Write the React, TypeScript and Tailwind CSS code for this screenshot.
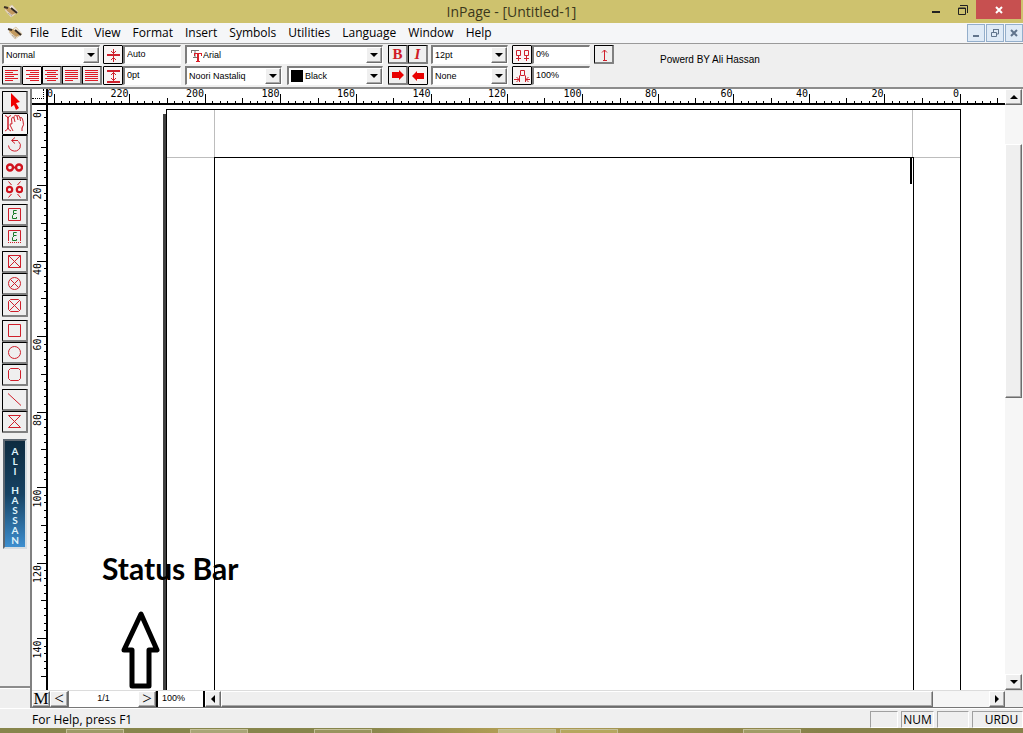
import React, { useLayoutEffect, useRef, useState } from 'react';

const MENUS = ['File', 'Edit', 'View', 'Format', 'Insert', 'Symbols', 'Utilities', 'Language', 'Window', 'Help'];

// 20 ruler units are 151/2 pixels wide
const STEP = 151 / 20;

const RAISED = 'border border-t-white border-l-white border-r-[#6d6d6d] border-b-[#6d6d6d] bg-[#efefef] shadow-[inset_-1px_-1px_0_#a8a8a8]';
const SUNKEN = 'border-t-2 border-l-2 border-t-[#7d7d7d] border-l-[#7d7d7d] border-r border-b border-r-white border-b-white bg-white';

const AppIcon = () => (
  <svg width="16" height="14" viewBox="0 0 16 14" fill="none">
    <path d="M2 6 L9 1 L15 8 L8 13 Z" fill="#f6ecdc" stroke="#dccbb0" />
    <path d="M1 3 L6 3 L13 9 L9 11 L4 7 Z" fill="#c39a5f" />
    <path d="M1 3 L5 4" stroke="#3d3227" strokeWidth="2" />
    <path d="M8 4 L14 9" stroke="#332a22" strokeWidth="2" />
    <path d="M5 9 L9 12" stroke="#a8a29c" />
  </svg>
);

type GlyphProps = { children: React.ReactNode; size?: number };

const Glyph = ({ children, size = 16 }: GlyphProps) => (
  <svg width={size} height={size} viewBox={`0 0 ${size} ${size}`} fill="none" stroke="#cf1f2b" className="shrink-0">
    {children}
  </svg>
);

const Arrow = ({ dir }: { dir: 'up' | 'down' | 'left' | 'right' }) => {
  const paths = {
    up: 'M0 6 L4 2 L8 6 Z',
    down: 'M0 2 L8 2 L4 6 Z',
    left: 'M6 0 L6 8 L2 4 Z',
    right: 'M2 0 L6 4 L2 8 Z',
  };
  return (
    <svg width="8" height="8" viewBox="0 0 8 8">
      <path d={paths[dir]} fill="#000" />
    </svg>
  );
};

type ToolButtonProps = { label: string; pressed?: boolean; onClick?: () => void; children: React.ReactNode };

const ToolButton = ({ label, pressed, onClick, children }: ToolButtonProps) => (
  <button
    aria-label={label}
    aria-pressed={pressed}
    onClick={onClick}
    className={`flex h-[19px] w-5 shrink-0 items-center justify-center rounded-[1px] border-t border-l border-black ${
      pressed ? 'border-r border-b bg-[#f8f4f4]' : 'border-r-2 border-b-2 border-r-[#808080] border-b-[#808080] bg-[#efefef]'
    }`}
  >
    {children}
  </button>
);

type ComboProps = { label: string; options: string[]; icon?: React.ReactNode; className: string };

const Combo = ({ label, options, icon, className }: ComboProps) => (
  <div className={`relative flex h-[19px] ${className}`}>
    <select
      aria-label={label}
      className={`block h-full w-full appearance-none rounded-none pr-5 text-[9px] leading-4 outline-none ${SUNKEN} ${icon ? 'pl-4' : 'pl-[2px]'}`}
    >
      {options.map((o) => (
        <option key={o}>{o}</option>
      ))}
    </select>
    {icon && <span className="pointer-events-none absolute top-1 left-1">{icon}</span>}
    <span className={`pointer-events-none absolute top-[2px] right-px bottom-px flex w-4 items-center justify-center ${RAISED}`}>
      <Arrow dir="down" />
    </span>
  </div>
);

const Field = ({ label, value }: { label: string; value: string }) => (
  <input
    aria-label={label}
    defaultValue={value}
    className={`h-[19px] w-[58px] rounded-none pb-[2px] pl-[2px] text-[9px] outline-none ${SUNKEN}`}
  />
);

// [from, to] of every text line
const ALIGNMENTS: { name: string; rows: number[][] }[] = [
  { name: 'Align left', rows: [[1, 14], [1, 9], [1, 14], [1, 10], [1, 14], [1, 9]] },
  { name: 'Align right', rows: [[1, 14], [5, 14], [1, 14], [4, 14], [1, 14], [5, 14]] },
  { name: 'Centre', rows: [[1, 14], [3, 12], [1, 14], [3, 12], [1, 14], [3, 12]] },
  { name: 'Justify', rows: [[1, 14], [1, 14], [1, 14], [1, 14], [1, 14], [1, 9]] },
  { name: 'Force justify', rows: [[1, 14], [1, 14], [1, 14], [1, 14], [1, 14], [1, 14]] },
];

const BOX = 'M2.5 2.5 H14.5 V14.5 H2.5 Z';
const ROUND_BOX = 'M4.5 2.5 H12.5 L14.5 4.5 V12.5 L12.5 14.5 H4.5 L2.5 12.5 V4.5 Z';
const AIN = 'M10.5 5 V4.5 H7.5 V7.5 H10.5 M8.5 7.5 L6.5 9.5 V12.5 H10.5 V11';

const TOOL_GROUPS: { name: string; icon: React.ReactNode }[][] = [
  [
    { name: 'Arrow', icon: <path d="M5 0 L14 9 L10 10 L13 15 L10 17 L8 12 L5 14 Z" fill="#f00000" stroke="none" /> },
    {
      name: 'Hand',
      icon: (
        <path d="M0 1.5 Q3 2 3 5 V13 Q3 16 0 17 M6 1.5 Q3 2 3 5 V13 Q3 16 6 17 M8 17 L5 11 Q5 9 7 10 L6.5 5 Q7 2 9 4 L10 8 M9 4 Q9 0 12 2 L13 6 M12 2 Q14 0 15 4 L15.5 7 M15 4 Q17 2 18 7 Q19.5 11 17 14 L17 17" />
      ),
    },
    { name: 'Rotate', icon: <path d="M12.5 4.5 Q15.5 7 14 11 Q11 15.5 6 13.5 Q2.5 12 2.5 8.5 M6 3.5 H12 M9 0.5 L5.5 3.5 L9 6.5" /> },
    {
      name: 'Link',
      icon: (
        <g stroke="#d0141f">
          <circle cx="4" cy="8.5" r="3" strokeWidth="2.4" />
          <circle cx="13" cy="8.5" r="3" strokeWidth="2.4" />
          <path d="M6 8.5 H11" strokeWidth="2" />
        </g>
      ),
    },
    {
      name: 'Unlink',
      icon: (
        <g stroke="#d0141f">
          <circle cx="3.5" cy="8.5" r="2.7" strokeWidth="2.2" />
          <circle cx="13.5" cy="8.5" r="2.7" strokeWidth="2.2" />
          <path d="M2.5 0.5 L5.5 4 M14.5 0.5 L11.5 4 M2.5 16.5 L5.5 13 M14.5 16.5 L11.5 13" />
        </g>
      ),
    },
  ],
  [
    { name: 'Text box', icon: <><path d={BOX} /><path d={AIN} stroke="#177a27" /></> },
    { name: 'Title text box', icon: <><path d="M2.5 13 V2.5 H14.5 V13" /><path d="M2 14.5 H15" strokeDasharray="1 1" /><path d={AIN} stroke="#177a27" /></> },
  ],
  [
    { name: 'Picture box', icon: <path d={`${BOX} M2.5 2.5 L14.5 14.5 M14.5 2.5 L2.5 14.5`} /> },
    { name: 'Oval picture', icon: <><circle cx="8.5" cy="8.5" r="6" /><path d="M4.5 4.5 L12.5 12.5 M12.5 4.5 L4.5 12.5" /></> },
    { name: 'Rounded picture', icon: <path d={`${ROUND_BOX} M3.5 3.5 L13.5 13.5 M13.5 3.5 L3.5 13.5`} /> },
  ],
  [
    { name: 'Rectangle', icon: <path d={BOX} /> },
    { name: 'Ellipse', icon: <circle cx="8.5" cy="8.5" r="6" /> },
    { name: 'Rounded rectangle', icon: <path d={ROUND_BOX} /> },
  ],
  [
    { name: 'Line', icon: <path d="M2 2.5 L15 14.5" /> },
    { name: 'Polygon', icon: <path d="M2.5 2.5 H14.5 L2.5 14.5 H14.5 Z" /> },
  ],
];

const tickLength = (i: number) => (i % 10 === 0 ? 9 : i % 5 === 0 ? 5 : 2);

const RULER_FONT = 'font-["DejaVu_Sans_Mono",monospace] text-[10px]';

const useSize = () => {
  const ref = useRef<HTMLDivElement>(null);
  const [size, setSize] = useState({ width: 0, height: 0 });
  useLayoutEffect(() => {
    const el = ref.current!;
    const measure = () => setSize({ width: el.clientWidth, height: el.clientHeight });
    measure();
    window.addEventListener('resize', measure);
    return () => window.removeEventListener('resize', measure);
  }, []);
  return { ref, ...size };
};

// zero sits 45px in from the right end and the values grow to the left
const TopRuler = () => {
  const { ref, width } = useSize();
  const zero = width - 45;
  const ticks = Array.from({ length: Math.max(0, Math.ceil(zero / STEP)) + 6 }, (_, k) => k - 6);
  return (
    <div ref={ref} className="min-w-0 flex-1 overflow-hidden">
      <svg width={width} height="14" className="block">
        <g stroke="#000" shapeRendering="crispEdges">
          {ticks.map((i) => (
            <line key={i} x1={zero - i * STEP} x2={zero - i * STEP} y1={14 - tickLength(i)} y2="14" />
          ))}
        </g>
        {ticks.filter((i) => i >= 0 && i % 10 === 0).map((i) => (
          <text key={i} x={zero - i * STEP - 1} y="8" textAnchor="end" className={RULER_FONT}>
            {i * 2}
          </text>
        ))}
      </svg>
    </div>
  );
};

const SideRuler = () => {
  const { ref, height } = useSize();
  const ticks = Array.from({ length: Math.max(0, Math.floor((height - 5) / STEP)) }, (_, i) => i);
  return (
    <div ref={ref} className="w-4 shrink-0 overflow-hidden border-r-2 border-black">
      <svg width="14" height={height} className="block">
        <g stroke="#000" shapeRendering="crispEdges">
          {ticks.map((i) => (
            <line key={i} y1={5 + i * STEP} y2={5 + i * STEP} x1={14 - tickLength(i)} x2="14" />
          ))}
        </g>
        {ticks.filter((i) => i % 10 === 0).map((i) => (
          <text key={i} transform={`translate(9 ${7 + i * STEP}) rotate(-90)`} textAnchor="end" className={RULER_FONT}>
            {i * 2}
          </text>
        ))}
      </svg>
    </div>
  );
};

const TitleBar = () => (
  <header className="grid h-[23px] shrink-0 grid-cols-[1fr_auto_1fr] bg-[#cec26e]">
    <div className="pt-1 pl-[3px]"><AppIcon /></div>
    <h1 className='font-["Open_Sans",sans-serif] text-[14px] leading-[23px] text-[#3b371c]'>InPage - [Untitled-1]</h1>
    <div className="flex h-[19px] justify-end pr-[2px]">
      <button aria-label="Minimize" className="flex w-[26px] items-center justify-center">
        <svg width="10" height="10"><path d="M0 7 H8" stroke="#222" strokeWidth="2" /></svg>
      </button>
      <button aria-label="Restore" className="flex w-[26px] items-center justify-center">
        <svg width="12" height="12" fill="none" stroke="#222">
          <path d="M3 1.5 H10.5 V9" /><path d="M1.5 4 H8.5 V10.5 H1.5 Z M1 4.5 H9" />
        </svg>
      </button>
      <button aria-label="Close" className="flex w-[45px] items-center justify-center bg-[#c75050]">
        <svg width="8" height="8"><path d="M1 1 L7 7 M7 1 L1 7" stroke="#fff" strokeWidth="2" /></svg>
      </button>
    </div>
  </header>
);

const MDI_BUTTON = 'flex h-[18px] w-[18px] items-center justify-center border border-[#93aecb] bg-[#dfeaf6]';

const MenuBar = () => (
  <nav className='flex h-[21px] shrink-0 items-center border-b border-[#9a9a9a] bg-[#f5f6f8] pl-[7px] font-["Open_Sans",sans-serif] text-[12px]'>
    <AppIcon />
    <div className="flex gap-3 pl-[7px]">
      {MENUS.map((m) => (
        <button key={m} className="leading-5">{m}</button>
      ))}
    </div>
    <div className="ml-auto flex gap-px">
      <button aria-label="Minimize document" className={MDI_BUTTON}>
        <svg width="10" height="10"><path d="M2 8 H8" stroke="#61748c" strokeWidth="2" /></svg>
      </button>
      <button aria-label="Restore document" className={MDI_BUTTON}>
        <svg width="10" height="10" fill="none" stroke="#61748c">
          <path d="M3 1.5 H9 M8.5 1 V6 H6 M3.5 1 V4" /><path d="M1.5 4.5 H6.5 V8.5 H1.5 Z" />
        </svg>
      </button>
      <button aria-label="Close document" className={MDI_BUTTON}>
        <svg width="8" height="8"><path d="M1 1 L7 7 M7 1 L1 7" stroke="#61748c" strokeWidth="2" /></svg>
      </button>
    </div>
  </nav>
);

const FormatBar = () => {
  const [align, setAlign] = useState('Align right');
  return (
    <section className="flex h-[45px] shrink-0 border-b-2 border-[#8c8c8c] pt-px pl-[2px]">
      <div className="mr-px flex flex-col gap-[2px]">
        <Combo label="Style" options={['Normal']} className="w-[98px]" />
        <div className="flex">
          {ALIGNMENTS.map((a) => (
            <ToolButton key={a.name} label={a.name} pressed={a.name === align} onClick={() => setAlign(a.name)}>
              <svg width="15" height="13" stroke="#e01b26" shapeRendering="crispEdges">
                {a.rows.map(([from, to], i) => (
                  <path key={i} d={`M${from} ${i * 2 + 1.5} H${to}`} />
                ))}
              </svg>
            </ToolButton>
          ))}
        </div>
      </div>

      <div className="mr-1 flex flex-col gap-[2px]">
        <div className="flex">
          <ToolButton label="Line spacing" pressed>
            <Glyph><path d="M2 8 H15" strokeWidth="2" /><path d="M8.5 2 V15 M6 4 L8.5 6.5 L11 4 M6 13 L8.5 10.5 L11 13" /></Glyph>
          </ToolButton>
          <Field label="Line spacing value" value="Auto" />
        </div>
        <div className="flex">
          <ToolButton label="Paragraph spacing" pressed>
            <Glyph><path d="M2 3 H15 M2 14 H15" strokeWidth="2" /><path d="M8.5 4 V13 M6 7 L8.5 4.5 L11 7 M6 10 L8.5 12.5 L11 10" /></Glyph>
          </ToolButton>
          <Field label="Paragraph spacing value" value="0pt" />
        </div>
      </div>

      <div className="mr-[5px] flex flex-col gap-[2px]">
        <Combo
          label="Latin font"
          options={['Arial']}
          className="w-[198px]"
          icon={
            <svg width="14" height="13" fill="none">
              <path d="M2 1.5 H10 M6 1 V9 M2.5 1 V4 M4 8.5 H8" stroke="#777" />
              <path d="M5 4.5 H13 M5.5 4 V7 M12.5 4 V7 M7 12.5 H11" stroke="#d8202a" />
              <path d="M9 4 V13" stroke="#d8202a" strokeWidth="2" />
            </svg>
          }
        />
        <div className="flex gap-[5px]">
          <Combo label="Urdu font" options={['Noori Nastaliq']} className="w-[97px]" />
          <Combo label="Colour" options={['Black']} className="w-[96px]" icon={<span className="block h-3 w-3 bg-black" />} />
        </div>
      </div>

      <div className="mr-[3px] flex flex-col gap-[2px]">
        <div className='flex font-["Liberation_Serif",serif] text-[15px] leading-4 font-bold text-[#d01c26]'>
          <ToolButton label="Bold">B</ToolButton>
          <ToolButton label="Italic"><i>I</i></ToolButton>
        </div>
        <div className="flex">
          <ToolButton label="Left to right">
            <svg width="14" height="12"><path d="M1 3 H8 V1 L13 6 L8 11 V9 H1 Z" fill="#e80000" /></svg>
          </ToolButton>
          <ToolButton label="Right to left" pressed>
            <svg width="14" height="12"><path d="M13 3 H6 V1 L1 6 L6 11 V9 H13 Z" fill="#e80000" /></svg>
          </ToolButton>
        </div>
      </div>

      <div className="mr-1 flex flex-col gap-[2px]">
        <Combo label="Size" options={['12pt']} className="w-[77px]" />
        <Combo label="Language" options={['None']} className="w-[77px]" />
      </div>

      <div className="mr-1 flex flex-col gap-[2px]">
        <div className="flex">
          <ToolButton label="Tracking" pressed>
            <Glyph><path d="M2.5 3.5 H6.5 V8.5 H2.5 Z M10.5 3.5 H14.5 V8.5 H10.5 Z M4.5 9 V14 M2 11.5 H7 M12.5 9 V14 M10 11.5 H15" /></Glyph>
          </ToolButton>
          <Field label="Tracking value" value="0%" />
        </div>
        <div className="flex">
          <ToolButton label="Scale" pressed>
            <Glyph><path d="M6.5 2.5 H10.5 V7.5 H6.5 Z M5.5 7.5 V14 M11.5 7.5 V14 M0 11.5 H5 M2.5 9 L5 11.5 L2.5 14 M16 11.5 H12 M14.5 9 L12 11.5 L14.5 14" /></Glyph>
          </ToolButton>
          <Field label="Scale value" value="100%" />
        </div>
      </div>

      <ToolButton label="Baseline">
        <svg width="10" height="13" fill="none" stroke="#cf1f2b"><path d="M5.5 2 V12 M3 4.5 L5.5 2 L8 4.5 M4 12.5 H8" /></svg>
      </ToolButton>
      <p className="ml-[46px] self-start pt-[7px] text-[10px] leading-4">Powerd BY Ali Hassan</p>
    </section>
  );
};

const ToolBox = () => (
  <aside className="flex w-[30px] shrink-0 flex-col gap-[3px] pt-[2px] pl-[2px]">
    {TOOL_GROUPS.map((group, g) => (
      <div key={g} className="flex flex-col">
        {group.map((tool) => (
          <button
            key={tool.name}
            aria-label={tool.name}
            className={`flex h-[22px] w-[26px] items-center justify-center rounded-[1px] border-t border-l border-black ${
              tool.name === 'Hand' ? 'border-r border-b bg-[#f8f6f6]' : 'border-r-2 border-b-2 border-r-[#808080] border-b-[#808080] bg-[#efefef]'
            }`}
          >
            <Glyph size={tool.name === 'Hand' ? 20 : 17}>{tool.icon}</Glyph>
          </button>
        ))}
      </div>
    ))}
    <div className="mt-[3px] ml-px flex h-[110px] w-6 flex-col items-center border-2 border-t-[#5c6670] border-l-[#5c6670] border-r-[#d5dde2] border-b-[#d5dde2] bg-linear-to-b from-[#0d2b40] via-[#164263] to-[#3d8fd0] pt-[5px] text-[#dff3fb]">
      {['ALI', 'HASSAN'].map((word) => (
        <p key={word} className='mb-[9px] flex w-3 flex-col items-center font-["Lato",sans-serif] text-[10px] leading-[10px] font-bold'>
          {word.split('').map((c, i) => (
            <span key={i}>{c}</span>
          ))}
        </p>
      ))}
    </div>
    <hr className="-ml-[2px] mt-auto mb-[19px] border-t-2 border-b border-t-[#8c8c8c] border-b-white" />
  </aside>
);

const TRACK = 'bg-[#f6f6f6]';

const VerticalScroll = () => (
  <div className={`flex w-[18px] shrink-0 flex-col pr-px ${TRACK}`}>
    <button aria-label="Scroll up" className={`flex h-4 shrink-0 items-center justify-center ${RAISED}`}><Arrow dir="up" /></button>
    <div className="grow-[39]" />
    <div className={`grow-[253] ${RAISED}`} />
    <div className="grow-[277]" />
    <button aria-label="Scroll down" className={`flex h-4 shrink-0 items-center justify-center ${RAISED}`}><Arrow dir="down" /></button>
  </div>
);

const DocumentPage = () => (
  <main className="relative flex min-w-0 flex-1 justify-end overflow-hidden bg-white pt-1 pr-11">
    <div className="flex h-[1123px] w-[798px] shrink-0">
      <div className="mt-[5px] w-[3px] bg-[#404040]" />
      {/* sheet: margin guides outside, text frame inside */}
      <div className="grid flex-1 grid-cols-[48px_1fr_48px] grid-rows-[48px_1fr] border border-black">
        <div className="border-r border-b border-[#bdbdbd]" />
        <div />
        <div className="border-b border-l border-[#bdbdbd]" />
        <div />
        <div className="-mt-px -mr-[2px] -ml-px flex justify-end border border-black pr-px">
          <span className="h-[26px] w-[2px] bg-black" />
        </div>
        <div />
      </div>
    </div>
    <div className="absolute bottom-0 left-[54px] flex flex-col gap-6">
      <p className='font-["Lato",sans-serif] text-[30px] leading-9 font-bold'>Status Bar</p>
      <svg width="40" height="80" viewBox="0 0 40 80" className="ml-[18px]" fill="none">
        <path d="M21 4 L37 40 H29 V76 H12 V40 H4 Z" stroke="#000" strokeWidth="5" strokeLinejoin="round" />
      </svg>
    </div>
  </main>
);

const NAV_BUTTON = `flex w-[18px] shrink-0 items-center justify-center leading-4 ${RAISED}`;

const PageBar = () => (
  <div className="flex h-[18px] shrink-0 border-t border-b border-t-[#dcdcdc] border-b-[#777]">
    <button className={`${NAV_BUTTON} font-["Liberation_Serif",serif] text-[17px]`}>M</button>
    <button aria-label="Previous page" className={`${NAV_BUTTON} font-["Liberation_Serif",serif] text-[17px]`}>&lt;</button>
    <input aria-label="Page" defaultValue="1/1" className="w-[70px] border-l border-[#777] bg-white text-center text-[9px] outline-none" />
    <button aria-label="Next page" className={`${NAV_BUTTON} font-["Liberation_Serif",serif] text-[17px]`}>&gt;</button>
    <input aria-label="Zoom" defaultValue="100%" className="w-[49px] border-r-2 border-l-2 border-black bg-white pl-1 text-[9px] outline-none" />
    <div className={`flex flex-1 ${TRACK}`}>
      <button aria-label="Scroll left" className={`flex w-4 items-center justify-center ${RAISED}`}><Arrow dir="left" /></button>
      <div className={`grow-[711] ${RAISED}`} />
      <div className="grow-[56]" />
      <button aria-label="Scroll right" className={`flex w-4 items-center justify-center ${RAISED}`}><Arrow dir="right" /></button>
    </div>
    <div className="w-[18px]" />
  </div>
);

const PANE = 'h-[17px] border-t border-l border-[#a0a0a0] border-r border-b border-r-white border-b-white text-center';

const StatusBar = () => (
  <footer className='flex h-5 shrink-0 items-end justify-between border-t border-white pl-8 font-["Open_Sans",sans-serif] text-[12px] leading-4'>
    <span>For Help, press F1</span>
    <div className="flex gap-[3px]">
      <div className={`w-[28px] ${PANE}`} />
      <div className={`w-[33px] ${PANE}`}>NUM</div>
      <div className={`w-[32px] ${PANE}`} />
      <div className={`w-[51px] pl-2 ${PANE}`}>URDU</div>
    </div>
  </footer>
);

const TASKS = [
  'ml-[66px] bg-[#9d9a68]',
  'ml-[66px] bg-[#a8a577]',
  'ml-[66px] bg-[#98945e]',
  'ml-[126px] bg-[#c2ba86]',
  'ml-1 bg-[#b5a75f]',
  'ml-[125px] bg-[#a09c66]',
];

const TaskStrip = () => (
  <div className="flex h-[5px] shrink-0 bg-linear-to-r from-[#87854c] from-35% via-[#b39f55] via-50% to-[#87814a] to-80% pt-px">
    {TASKS.map((task) => (
      <div key={task} className={`w-[58px] border-x border-t border-[#c5c09a] ${task}`} />
    ))}
  </div>
);

const App: React.FC = () => (
  <div className='flex h-screen flex-col overflow-hidden bg-[#efefef] font-["Liberation_Sans",Arial,sans-serif] text-black'>
    <TitleBar />
    <MenuBar />
    <FormatBar />
    <div className="flex min-h-0 flex-1">
      <ToolBox />
      <div className="flex min-w-0 flex-1 flex-col border-l-2 border-[#808080]">
        <div className="flex min-h-0 flex-1">
          <div className="flex min-w-0 flex-1 flex-col bg-white">
            <div className="flex h-4 shrink-0 border-b-2 border-black">
              <div className="flex w-4 shrink-0 border-r-2 border-black">
                <div className="mb-1 w-3 border-r border-b border-dotted border-black" />
              </div>
              <TopRuler />
            </div>
            <div className="flex min-h-0 flex-1">
              <SideRuler />
              <DocumentPage />
            </div>
          </div>
          <VerticalScroll />
        </div>
        <PageBar />
      </div>
    </div>
    <StatusBar />
    <TaskStrip />
  </div>
);

export default App;
